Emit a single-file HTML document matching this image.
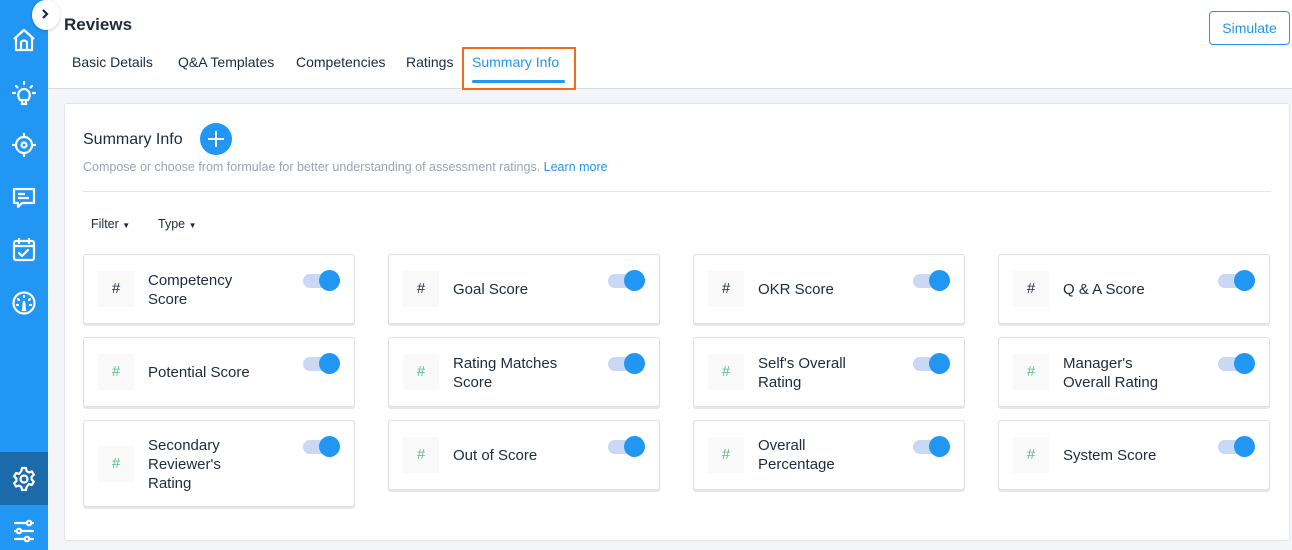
<!DOCTYPE html>
<html><head><meta charset="utf-8"><style>
*{box-sizing:border-box;margin:0;padding:0}
body{width:1292px;height:550px;overflow:hidden;background:#f4f5f9;font-family:"Liberation Sans",sans-serif;color:#1f2a3d;position:relative}
.side{position:absolute;left:0;top:0;width:48px;height:550px;background:#2196f3}
.side svg{position:absolute;left:11px}
.sel{position:absolute;left:0;top:452px;width:48px;height:53px;background:#1b6bab}
.collapse{position:absolute;left:32px;top:0;width:28px;height:30px;border-radius:50%;background:#fff;box-shadow:0 1px 3px rgba(0,0,0,.2)}
.head{position:absolute;left:48px;top:0;right:0;height:89px;background:#fff;border-bottom:1px solid #d8dbe2}
.title{position:absolute;left:64px;top:15px;font-size:17px;font-weight:bold;color:#1f2a3d}
.tab{position:absolute;top:54px;font-size:14px;color:#1f2a3d}
.sim{position:absolute;left:1209px;top:11px;width:81px;height:34px;border:1px solid #2196f3;border-radius:4px;color:#2196f3;font-size:14px;text-align:center;line-height:32px}
.panel{position:absolute;left:64px;top:103px;width:1226px;height:438px;background:#fff;border:1px solid #e3e5ea;border-radius:3px}
.card{position:absolute;width:272px;height:70px;background:#fff;border:1px solid #dedfe3;border-radius:3px;box-shadow:0 2px 0 #e6e7ea}
.hash{position:absolute;left:14px;width:36px;height:36px;background:#f9f9f9;text-align:center;line-height:36px;font-size:15px}
.lbl{position:absolute;left:64px;font-size:15px;line-height:19px;color:#1f2a3d}
.tg{position:absolute;left:219px;top:19px;width:37px;height:14px;border-radius:7px;background:#c9d8f4}
.tg:after{content:"";position:absolute;left:16px;top:-4px;width:21px;height:21px;border-radius:50%;background:#2196f3}
</style></head><body>
<div class="side">
<svg style="top:27px" width="26" height="26" viewBox="0 0 26 26" fill="none" stroke="#fff" stroke-width="2.2" stroke-linejoin="round"><path d="M3 12 L13 3 L23 12 M5 10 V23 H21 V10"/><path d="M10 23 V15 Q13 12 16 15 V23"/></svg>
<svg style="top:80px" width="26" height="28" viewBox="0 0 26 28" fill="none" stroke="#fff" stroke-width="2.2" stroke-linecap="round"><path d="M13 2v2M5 6l1.5 1.5M21 6l-1.5 1.5M2 13h2M22 13h2"/><path d="M9 20 Q6 16 8 12 Q10 9 13 9 Q16 9 18 12 Q20 16 17 20 Z"/><path d="M11 21v3h4v-3"/></svg>
<svg style="top:132px" width="26" height="26" viewBox="0 0 26 26" fill="none" stroke="#fff" stroke-width="2.2"><circle cx="13" cy="13" r="8"/><circle cx="13" cy="13" r="2.5"/><path d="M13 1v5M13 20v5M1 13h5M20 13h5"/></svg>
<svg style="top:185px" width="26" height="26" viewBox="0 0 26 26" fill="none" stroke="#fff" stroke-width="2.2" stroke-linejoin="round"><path d="M3 4h20v14H11l-4 4v-4H3z"/><path d="M7 9h7M7 13h11"/></svg>
<svg style="top:237px" width="26" height="26" viewBox="0 0 26 26" fill="none" stroke="#fff" stroke-width="2.2" stroke-linecap="round" stroke-linejoin="round"><rect x="3" y="4" width="20" height="19" rx="2"/><path d="M3 9h20M8 2v4M18 2v4M8 16l3 3 6-6"/></svg>
<svg style="top:290px" width="26" height="26" viewBox="0 0 26 26" fill="none" stroke="#fff" stroke-width="2.2" stroke-linecap="round"><circle cx="13" cy="13" r="10.5"/><path d="M13 6v1M7 9l1 1M19 9l-1 1M6 15h1M20 15h-1"/><path d="M12 20 L13 11 L14 20 Z" fill="#fff"/></svg>
<div class="sel"></div>
<svg style="top:466px" width="26" height="26" viewBox="0 0 26 26" fill="none" stroke="#fff" stroke-width="2.2" stroke-linejoin="round"><path d="M11 2h4l.6 3 2.4 1.4 2.9-1 2 3.4-2.3 2 0 2.8 2.3 2-2 3.4-2.9-1L15.6 21 15 24h-4l-.6-3L8 19.6l-2.9 1-2-3.4 2.3-2v-2.8l-2.3-2 2-3.4 2.9 1L10.4 5z"/><circle cx="13" cy="13" r="3.5"/></svg>
<svg style="top:518px" width="26" height="26" viewBox="0 0 26 26" fill="none" stroke="#fff" stroke-width="2.2"><path d="M3 5h13M20 5h3M3 13h3M10 13h13M3 21h11M18 21h5"/><circle cx="18" cy="5" r="2.2"/><circle cx="8" cy="13" r="2.2"/><circle cx="16" cy="21" r="2.2"/></svg>
</div>
<div class="head"></div>
<div class="collapse"><svg width="28" height="30" viewBox="0 0 28 30"><path d="M11 10l4 4-4 4" fill="none" stroke="#1f2a3d" stroke-width="2.2"/></svg></div>
<div class="title">Reviews</div>
<div class="tab" style="left:72px">Basic Details</div>
<div class="tab" style="left:178px">Q&amp;A Templates</div>
<div class="tab" style="left:296px">Competencies</div>
<div class="tab" style="left:406px">Ratings</div>
<div style="position:absolute;left:462px;top:47px;width:114px;height:43px;border:2px solid #f26a1b"></div>
<div class="tab" style="left:472px;color:#2196f3">Summary Info</div>
<div style="position:absolute;left:472px;top:80px;width:93px;height:3px;background:#2196f3;border-radius:2px"></div>
<div class="sim">Simulate</div>
<div class="panel">
<div style="position:absolute;left:18px;top:27px;font-size:16px">Summary Info</div>
<div style="position:absolute;left:135px;top:19px;width:32px;height:32px;border-radius:50%;background:#2196f3"><svg width="32" height="32"><path d="M16 8v16M8 16h16" stroke="#fff" stroke-width="2"/></svg></div>
<div style="position:absolute;left:18px;top:56px;font-size:12.5px;color:#9aa3b5">Compose or choose from formulae for better understanding of assessment ratings. <span style="color:#2196f3">Learn more</span></div>
<div style="position:absolute;left:18px;top:87px;width:1188px;height:1px;background:#e3e5ea"></div>
<div style="position:absolute;left:26px;top:113px;font-size:12.5px">Filter <span style="font-size:8px">▼</span></div>
<div style="position:absolute;left:93px;top:113px;font-size:12.5px">Type <span style="font-size:8px">▼</span></div>
</div>
<!-- cards -->
<div class="card" style="left:83px;top:254px"><div class="hash" style="top:16px">#</div><div class="lbl" style="top:16px">Competency<br>Score</div><div class="tg"></div></div>
<div class="card" style="left:388px;top:254px"><div class="hash" style="top:16px">#</div><div class="lbl" style="top:25px">Goal Score</div><div class="tg"></div></div>
<div class="card" style="left:693px;top:254px"><div class="hash" style="top:16px">#</div><div class="lbl" style="top:25px">OKR Score</div><div class="tg"></div></div>
<div class="card" style="left:998px;top:254px"><div class="hash" style="top:16px">#</div><div class="lbl" style="top:25px">Q &amp; A Score</div><div class="tg"></div></div>
<div class="card" style="left:83px;top:337px"><div class="hash" style="top:16px;color:#5cc08a">#</div><div class="lbl" style="top:25px">Potential Score</div><div class="tg"></div></div>
<div class="card" style="left:388px;top:337px"><div class="hash" style="top:16px;color:#5cc08a">#</div><div class="lbl" style="top:16px">Rating Matches<br>Score</div><div class="tg"></div></div>
<div class="card" style="left:693px;top:337px"><div class="hash" style="top:16px;color:#5cc08a">#</div><div class="lbl" style="top:16px">Self's Overall<br>Rating</div><div class="tg"></div></div>
<div class="card" style="left:998px;top:337px"><div class="hash" style="top:16px;color:#5cc08a">#</div><div class="lbl" style="top:16px">Manager's<br>Overall Rating</div><div class="tg"></div></div>
<div class="card" style="left:83px;top:420px;height:87px"><div class="hash" style="top:25px;color:#5cc08a">#</div><div class="lbl" style="top:15px">Secondary<br>Reviewer's<br>Rating</div><div class="tg"></div></div>
<div class="card" style="left:388px;top:420px"><div class="hash" style="top:16px;color:#5cc08a">#</div><div class="lbl" style="top:25px">Out of Score</div><div class="tg"></div></div>
<div class="card" style="left:693px;top:420px"><div class="hash" style="top:16px;color:#5cc08a">#</div><div class="lbl" style="top:15px">Overall<br>Percentage</div><div class="tg"></div></div>
<div class="card" style="left:998px;top:420px"><div class="hash" style="top:16px;color:#5cc08a">#</div><div class="lbl" style="top:25px">System Score</div><div class="tg"></div></div>
</body></html>
